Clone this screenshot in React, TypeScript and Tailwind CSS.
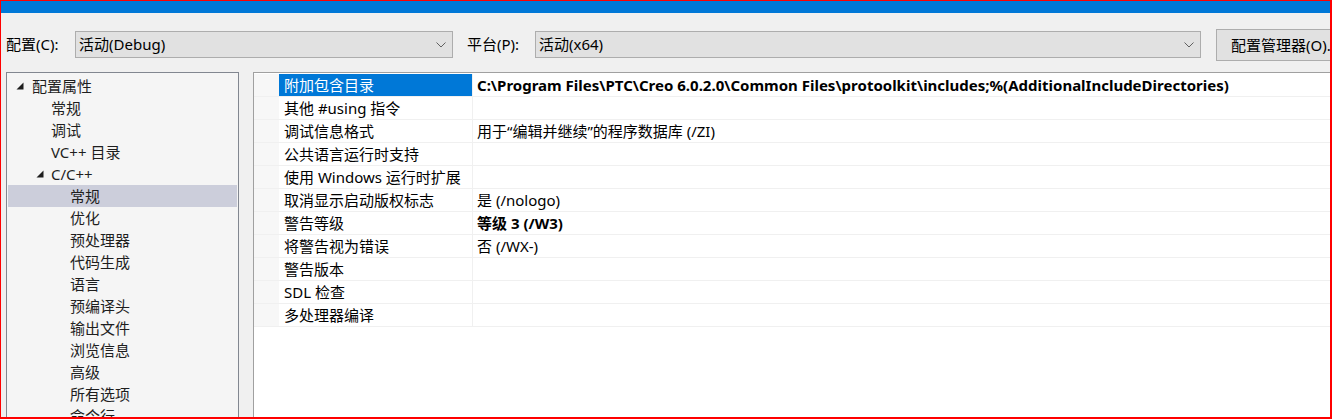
import React from 'react';

const FONT = { fontFamily: '"Noto Sans", "Noto Sans CJK SC", sans-serif' };

interface ITreeItem {
  label: string;
  level: 0 | 1 | 2;
  expanded?: boolean;
  selected?: boolean;
}

const treeItems: ITreeItem[] = [
  { label: '配置属性', level: 0, expanded: true },
  { label: '常规', level: 1 },
  { label: '调试', level: 1 },
  { label: 'VC++ 目录', level: 1 },
  { label: 'C/C++', level: 1, expanded: true },
  { label: '常规', level: 2, selected: true },
  { label: '优化', level: 2 },
  { label: '预处理器', level: 2 },
  { label: '代码生成', level: 2 },
  { label: '语言', level: 2 },
  { label: '预编译头', level: 2 },
  { label: '输出文件', level: 2 },
  { label: '浏览信息', level: 2 },
  { label: '高级', level: 2 },
  { label: '所有选项', level: 2 },
  { label: '命令行', level: 2 },
];

interface IProp {
  name: string;
  value?: string;
  bold?: boolean;
  active?: boolean;
}

const props: IProp[] = [
  {
    name: '附加包含目录',
    value: 'C:\\Program Files\\PTC\\Creo 6.0.2.0\\Common Files\\protoolkit\\includes;%(AdditionalIncludeDirectories)',
    bold: true,
    active: true,
  },
  { name: '其他 #using 指令' },
  { name: '调试信息格式', value: '用于“编辑并继续”的程序数据库 (/ZI)' },
  { name: '公共语言运行时支持' },
  { name: '使用 Windows 运行时扩展' },
  { name: '取消显示启动版权标志', value: '是 (/nologo)' },
  { name: '警告等级', value: '等级 3 (/W3)', bold: true },
  { name: '将警告视为错误', value: '否 (/WX-)' },
  { name: '警告版本' },
  { name: 'SDL 检查' },
  { name: '多处理器编译' },
];

function Chevron() {
  return (
    <svg width="10" height="6" viewBox="0 0 10 6" className="shrink-0">
      <path d="M0.5 0.5 L5 5 L9.5 0.5" fill="none" stroke="#606060" strokeWidth="1" />
    </svg>
  );
}

function Expander({ className }: { className: string }) {
  return (
    <svg width="8" height="8" viewBox="0 0 8 8" className={`shrink-0 ${className}`}>
      <polygon points="7.5,0.5 7.5,7.5 0.5,7.5" fill="#1e1e1e" />
    </svg>
  );
}

function Combo({ value, className }: { value: string; className: string }) {
  return (
    <div
      className={`flex h-[27px] shrink-0 items-center justify-between border border-[#adadad] bg-[#e1e1e1] pl-[3px] pr-[6px] text-[15px] text-black ${className}`}
    >
      <span>{value}</span>
      <Chevron />
    </div>
  );
}

export default function App() {
  return (
    <div
      className="flex h-[419px] w-[1332px] flex-col overflow-hidden border-t border-r-2 border-b-2 border-l border-[#ff0000] bg-[#f0f0f0]"
      style={FONT}
    >
      {/* window caption */}
      <div className="h-[12px] shrink-0 bg-[#0078d7]" />

      {/* configuration / platform bar */}
      <div className="flex h-[59px] shrink-0 items-start pt-[16px] text-[15px] text-black">
        <span className="mt-[4px] ml-[5px] w-[69px] shrink-0">配置(C):</span>
        <Combo value="活动(Debug)" className="mt-[2px] w-[378px]" />
        <span className="mt-[4px] ml-[14px] w-[68px] shrink-0">平台(P):</span>
        <Combo value="活动(x64)" className="mt-[2px] w-[666px]" />
        <div className="ml-[15px] flex h-[32px] min-w-0 flex-1 items-center overflow-hidden border border-r-0 border-[#adadad] bg-[#e1e1e1] pl-[14px] whitespace-nowrap">
          配置管理器(O)...
        </div>
      </div>

      <div className="flex min-h-0 flex-1">
        {/* category tree */}
        <div className="ml-[5px] w-[233px] shrink-0 border-t border-l border-r border-[#828790] bg-[#f5f5f5] pt-[2px]">
          {treeItems.map((item, i) => (
            <div
              key={i}
              className={`mx-[1px] flex h-[22px] items-center text-[15px] text-[#1e1e1e] ${
                item.selected ? 'bg-[#cccedb]' : ''
              }`}
            >
              {item.level === 0 && <Expander className="ml-[8px] mr-[8px]" />}
              {item.level === 1 && !item.expanded && <span className="ml-[43px]" />}
              {item.level === 1 && item.expanded && <Expander className="ml-[28px] mr-[7px]" />}
              {item.level === 2 && <span className="ml-[62px]" />}
              <span>{item.label}</span>
            </div>
          ))}
        </div>

        {/* property grid */}
        <div className="ml-[14px] flex-1 border-t border-l border-[#a0a0a0] bg-white pt-[1px]">
          {props.map((p, i) => (
            <div key={i} className="flex h-[23px] border-b border-[#f0f0f0] text-[15px]">
              <div className="w-[25px] shrink-0 bg-[#f7f7f7]" />
              <div
                className={`flex w-[194px] shrink-0 items-center border-r border-[#f0f0f0] pl-[5px] whitespace-nowrap ${
                  p.active ? 'bg-[#0078d7] text-white' : 'text-black'
                }`}
              >
                {p.name}
              </div>
              <div
                className={`flex flex-1 items-center pl-[4px] whitespace-nowrap text-black ${
                  p.bold ? 'font-bold' : ''
                }`}
              >
                {p.value}
              </div>
            </div>
          ))}
        </div>
      </div>
    </div>
  );
}
